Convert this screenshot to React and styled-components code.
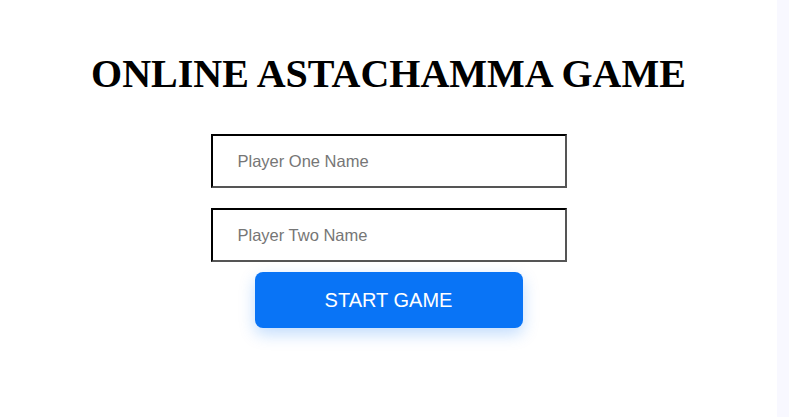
import React from "react";
import styled, { createGlobalStyle } from "styled-components";

const GlobalStyle = createGlobalStyle`
  body {
    margin: 0;
    background: #f8f8ff;
  }
`;

export default function App() {
  return (
    <>
      <GlobalStyle />
      <Page>
        <Main>
          <Title>ONLINE ASTACHAMMA GAME</Title>
          <Form>
            <NameInput placeholder="Player One Name" />
            <NameInput placeholder="Player Two Name" />
            <StartButton>START GAME</StartButton>
          </Form>
        </Main>
        <SideStrip />
      </Page>
    </>
  );
}

const Page = styled.div`
  display: flex;
  width: 100%;
  height: 100vh;
`;

const Main = styled.main`
  flex: 1;
  background: #fff;
  display: flex;
  flex-direction: column;
  align-items: center;
  padding-top: 51px;
`;

const SideStrip = styled.div`
  width: 12px;
  background: #f8f8ff;
`;

const Title = styled.h1`
  margin: 0;
  font-family: "Liberation Serif", "Times New Roman", serif;
  font-weight: bold;
  font-size: 40px;
  line-height: 46px;
  color: #000;
`;

const Form = styled.div`
  display: flex;
  flex-direction: column;
  align-items: center;
  margin-top: 37px;
`;

const NameInput = styled.input`
  box-sizing: border-box;
  width: 356px;
  height: 54px;
  margin-bottom: 20px;
  padding: 0 25px;
  border-width: 2px;
  border-style: solid;
  border-color: #000 #555 #555 #000;
  background: #fff;
  font-family: "Liberation Sans", Arial, sans-serif;
  font-size: 16.5px;
  outline: none;

  &::placeholder {
    color: #767676;
  }

  &:last-of-type {
    margin-bottom: 10px;
  }
`;

const StartButton = styled.button`
  width: 268px;
  height: 56px;
  border: none;
  border-radius: 8px;
  background: #0974f6;
  color: #fff;
  font-family: "Liberation Sans", Arial, sans-serif;
  font-size: 20px;
  cursor: pointer;
  box-shadow: 0 6px 16px rgba(9, 116, 246, 0.25);
`;
